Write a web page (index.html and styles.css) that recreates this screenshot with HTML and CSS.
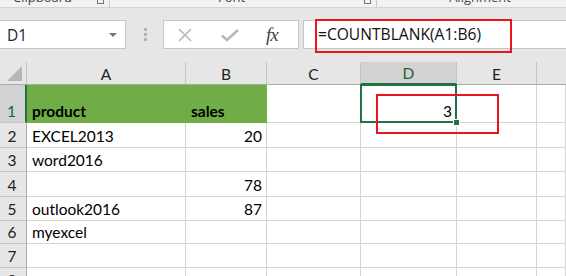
FILE: index.html
```html
<!DOCTYPE html>
<html>
<head>
<meta charset="utf-8">
<link rel="stylesheet" href="styles.css">
</head>
<body>
<div class="page">
  <div class="ribbon">
    <span class="rl rl-clip">Clipboard</span>
    <span class="launch l1"></span>
    <span class="sep"></span>
    <span class="rl rl-font">Font</span>
    <span class="launch l2"></span>
    <span class="sep"></span>
    <span class="rl rl-align">Alignment</span>
  </div>
  <div class="fbar">
    <div class="namebox">
      <span class="nb-text">D1</span>
      <span class="nb-arrow"></span>
    </div>
    <div class="dots"><i></i><i></i><i></i></div>
    <div class="btnbox">
      <svg class="ic ic-x" width="16" height="14" viewBox="0 0 16 14"><path d="M2 1 L14 13 M14 1 L2 13" stroke="#b8b8b8" stroke-width="1.6" fill="none"/></svg>
      <svg class="ic ic-ok" width="18" height="14" viewBox="0 0 18 14"><path d="M1 7.5 L6 12 L17 2" stroke="#b8b8b8" stroke-width="2.6" fill="none"/></svg>
      <span class="fx">fx</span>
    </div>
    <div class="formula">=COUNTBLANK(A1:B6)</div>
  </div>
  <div class="grid">
    <div class="corner"><span class="tri"></span></div>
    <div class="ch">A</div>
    <div class="ch">B</div>
    <div class="ch">C</div>
    <div class="ch ch-sel">D</div>
    <div class="ch">E</div>
    <div class="ch ch-last"></div>

    <div class="rh rh-sel r1">1</div>
    <div class="c green bold r1">product</div>
    <div class="c green bold r1">sales</div>
    <div class="c r1"></div>
    <div class="c num r1">3</div>
    <div class="c r1"></div>
    <div class="c r1"></div>

    <div class="rh r2">2</div>
    <div class="c r2">EXCEL2013</div>
    <div class="c num r2">20</div>
    <div class="c r2"></div><div class="c r2"></div><div class="c r2"></div><div class="c r2"></div>

    <div class="rh r3">3</div>
    <div class="c r3">word2016</div>
    <div class="c r3"></div>
    <div class="c r3"></div><div class="c r3"></div><div class="c r3"></div><div class="c r3"></div>

    <div class="rh r4">4</div>
    <div class="c r4"></div>
    <div class="c num r4">78</div>
    <div class="c r4"></div><div class="c r4"></div><div class="c r4"></div><div class="c r4"></div>

    <div class="rh r5">5</div>
    <div class="c r5">outlook2016</div>
    <div class="c num r5">87</div>
    <div class="c r5"></div><div class="c r5"></div><div class="c r5"></div><div class="c r5"></div>

    <div class="rh r6">6</div>
    <div class="c r6">myexcel</div>
    <div class="c r6"></div>
    <div class="c r6"></div><div class="c r6"></div><div class="c r6"></div><div class="c r6"></div>

    <div class="rh r7">7</div>
    <div class="c r7"></div><div class="c r7"></div><div class="c r7"></div><div class="c r7"></div><div class="c r7"></div><div class="c r7"></div>

    <div class="rh r8">8</div>
    <div class="c r8"></div><div class="c r8"></div><div class="c r8"></div><div class="c r8"></div><div class="c r8"></div><div class="c r8"></div>
  </div>

  <div class="sel-box"></div>
  <div class="fill-handle"></div>
  <div class="red-cell"></div>
  <div class="red-formula"></div>
</div>
</body>
</html>
```

FILE: styles.css
```css
html, body {
  margin: 0;
  padding: 0;
  background: #ffffff;
}
.page {
  position: relative;
  width: 566px;
  height: 276px;
  overflow: hidden;
  background: #e6e6e6;
}

/* ribbon strip */
.ribbon {
  height: 7px;
  border-bottom: 1px solid #d4d4d4;
  background: #f3f3f3;
  display: flex;
  align-items: flex-end;
  overflow: hidden;
  font-family: "Open Sans", sans-serif;
  font-size: 13px;
  color: #444;
}
.rl {
  line-height: 13px;
  margin-bottom: 3px;
  white-space: nowrap;
}
.rl-clip { margin-left: 13px; }
.rl-font { margin-left: 108px; }
.rl-align { margin-left: 72px; }
.launch {
  width: 7px;
  height: 7px;
  border: 1px solid #777;
  border-top: none;
  box-sizing: border-box;
  margin-bottom: 3px;
  align-self: flex-end;
}
.l1 { margin-left: 25px; }
.l2 { margin-left: 119px; }
.sep {
  width: 1px;
  height: 7px;
  background: #c8c8c8;
  margin-left: 5px;
}

/* formula bar */
.fbar {
  height: 54px;
  box-sizing: border-box;
  padding-top: 12px;
  display: flex;
  align-items: flex-start;
  font-family: "Open Sans", sans-serif;
}
.namebox {
  width: 126px;
  height: 29px;
  box-sizing: border-box;
  background: #fff;
  border: 1px solid #c6c6c6;
  border-left: none;
  display: flex;
  align-items: center;
  justify-content: space-between;
  padding: 0 8px 0 7px;
}
.nb-text {
  font-size: 15.5px;
  color: #222;
  line-height: 20px;
}
.nb-arrow {
  width: 0;
  height: 0;
  border-left: 4px solid transparent;
  border-right: 4px solid transparent;
  border-top: 4px solid #777;
  margin-top: 1px;
}
.dots {
  margin-left: 18px;
  margin-top: 8px;
  display: flex;
  flex-direction: column;
  gap: 2px;
}
.dots i {
  display: block;
  width: 3px;
  height: 3px;
  background: #b4b4b4;
}
.btnbox {
  margin-left: 16px;
  width: 136px;
  height: 29px;
  box-sizing: border-box;
  background: #fff;
  border: 1px solid #c6c6c6;
  display: flex;
  align-items: center;
}
.ic-x { margin-left: 13px; }
.ic-ok { margin-left: 28px; }
.fx {
  margin-left: 27px;
  font-family: "Liberation Serif", serif;
  font-style: italic;
  font-size: 19px;
  color: #444;
  line-height: 20px;
  letter-spacing: -1px;
}
.formula {
  margin-left: 4px;
  margin-right: -20px;
  flex: 1;
  height: 29px;
  box-sizing: border-box;
  background: #fff;
  border: 1px solid #c6c6c6;
  padding-left: 14px;
  font-size: 15.6px;
  line-height: 26px;
  color: #111;
  white-space: nowrap;
}

/* grid */
.grid {
  display: grid;
  grid-template-columns: 27px 159px 81px 94px 96px 80px 1fr;
  grid-template-rows: 23px 38px 25px 24px 25px 24px 23px 24px 24px;
  font-family: Lato, sans-serif;
  font-size: 15.5px;
  color: #000;
}
.corner {
  background: #e6e6e6;
  border-right: 1px solid #c4c4c4;
  border-bottom: 1px solid #a9a9a9;
  box-sizing: border-box;
  position: relative;
}
.tri {
  position: absolute;
  right: 4px;
  bottom: 3px;
  width: 0;
  height: 0;
  border-left: 15px solid transparent;
  border-bottom: 15px solid #b6b6b6;
}
.ch {
  background: #e6e6e6;
  border-right: 1px solid #c4c4c4;
  border-bottom: 1px solid #a9a9a9;
  box-sizing: border-box;
  display: flex;
  align-items: center;
  justify-content: center;
  color: #222;
  line-height: 18px;
  padding-top: 1px;
}
.ch-sel {
  background: #d2d2d2;
  color: #1f5e3a;
  border-bottom: 2px solid #217346;
}
.ch-last { border-right: none; }
.rh {
  background: #e6e6e6;
  border-right: 1px solid #a9a9a9;
  border-bottom: 1px solid #c8c8c8;
  box-sizing: border-box;
  display: flex;
  align-items: flex-end;
  justify-content: center;
  color: #222;
  line-height: 18px;
  padding-bottom: 2px;
  padding-right: 2px;
}
.rh-sel {
  background: #d2d2d2;
  color: #1f5e3a;
  border-right: 2px solid #217346;
}
.c {
  background: #fff;
  border-right: 1px solid #d4d4d4;
  border-bottom: 1px solid #d4d4d4;
  box-sizing: border-box;
  display: flex;
  align-items: flex-end;
  padding: 0 4px 2px 5px;
  line-height: 18px;
  white-space: nowrap;
  overflow: visible;
}
.num { justify-content: flex-end; }
.green {
  background: #70ad47;
  border-right-color: #70ad47;
  border-bottom-color: #70ad47;
}
.bold { font-weight: 700; }

/* overlays */
.sel-box {
  position: absolute;
  left: 360px;
  top: 84px;
  width: 97px;
  height: 39px;
  box-sizing: border-box;
  border: 2px solid #217346;
}
.fill-handle {
  position: absolute;
  left: 453px;
  top: 119px;
  width: 7px;
  height: 7px;
  box-sizing: border-box;
  background: #217346;
  border: 1px solid #fff;
}
.red-cell {
  position: absolute;
  left: 376px;
  top: 94px;
  width: 123px;
  height: 40px;
  box-sizing: border-box;
  border: 2px solid #e8141e;
}
.red-formula {
  position: absolute;
  left: 315px;
  top: 19px;
  width: 197px;
  height: 34px;
  box-sizing: border-box;
  border: 2px solid #e8141e;
}
```
